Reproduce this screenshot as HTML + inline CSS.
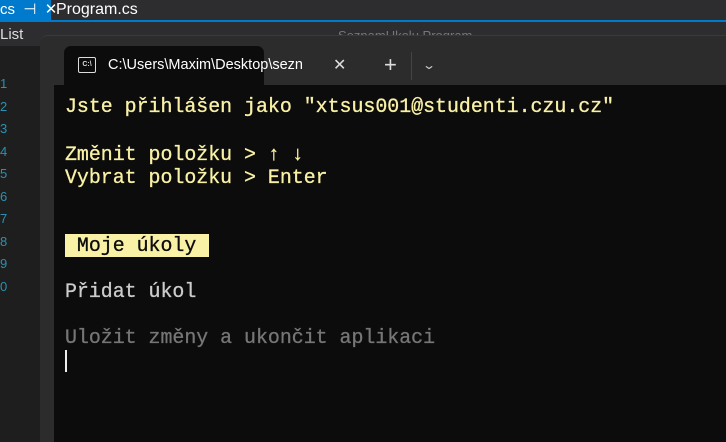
<!DOCTYPE html>
<html><head><meta charset="utf-8"><style>
*{margin:0;padding:0;box-sizing:border-box}
body{width:726px;height:442px;overflow:hidden;background:#1e1e1e;position:relative;font-family:"Liberation Sans",sans-serif}
.a{position:absolute}
.t{position:absolute;font-family:"Liberation Mono",monospace;font-size:19.9px;white-space:pre;line-height:23px;left:65px;-webkit-text-stroke:0.3px currentColor}
.y{color:#f9f1a5}
</style></head><body>
<div class="a" style="left:0;top:0;width:726px;height:20px;background:#2d2d30"></div>
<div class="a" style="left:0;top:0;width:51px;height:20px;background:#007acc;color:#fff;font-size:15px;line-height:20px;white-space:nowrap">cs&nbsp;&nbsp;⊣&nbsp;&nbsp;✕</div>
<div class="a" style="left:56px;top:0;color:#fff;font-size:16px;line-height:19px">Program.cs</div>
<div class="a" style="left:0;top:20px;width:726px;height:2px;background:#007acc"></div>
<div class="a" style="left:0;top:22px;width:726px;height:24px;background:#2d2d30"></div>
<div class="a" style="left:0;top:26px;color:#ddd;font-size:15px">List</div>
<div class="a" style="left:0;top:46px;width:40px;height:396px;background:#1e1e1e;color:#2b91af;font-size:13px;line-height:22.5px;padding-top:27px">1<br>2<br>3<br>4<br>5<br>6<br>7<br>8<br>9<br>0</div>
<div class="a" style="left:338px;top:28px;color:#777;font-size:13px">SeznamUkolu.Program</div>
<div class="a" style="left:40px;top:35px;width:686px;height:407px;background:#2c2c2c;border-radius:8px 0 0 0;border-top:1px solid #3a3a3a"></div>
<div class="a" style="left:54px;top:85px;width:672px;height:357px;background:#0c0c0c"></div>
<div class="a" style="left:64px;top:46px;width:200px;height:40px;background:#0c0c0c;border-radius:7px 7px 0 0"></div>
<div class="a" style="left:78px;top:57px;width:18px;height:16px;border:1.5px solid #ddd;border-radius:2px;font-size:7px;color:#ddd;line-height:13px;text-align:center;font-weight:bold">C:\</div>
<div class="a" style="left:108px;top:57px;color:#fff;font-size:14.5px;width:208px;overflow:hidden;white-space:nowrap">C:\Users\Maxim\Desktop\sezn</div>
<div class="a" style="left:333px;top:55px;color:#ddd;font-size:16px">✕</div>
<div class="a" style="left:384px;top:52px;color:#ddd;font-size:22px">+</div>
<div class="a" style="left:411px;top:52px;width:1px;height:28px;background:#444"></div>
<div class="a" style="left:424px;top:58px;color:#ccc;font-size:12px;transform:scaleX(1.4)">⌄</div>
<div class="t y" style="top:95px">Jste přihlášen jako "xtsus001@studenti.czu.cz"</div>
<div class="t y" style="top:143px">Změnit položku &gt; ↑ ↓</div>
<div class="t y" style="top:166px">Vybrat položku &gt; Enter</div>
<div class="a" style="left:65px;top:234px;width:144px;height:23px;background:#f9f1a5"></div>
<div class="t" style="top:234px;color:#0c0c0c"> Moje úkoly</div>
<div class="t" style="top:280px;color:#cccccc">Přidat úkol</div>
<div class="t" style="top:326px;color:#767676">Uložit změny a ukončit aplikaci</div>
<div class="a" style="left:65px;top:350px;width:2px;height:22px;background:#eee"></div>
</body></html>
